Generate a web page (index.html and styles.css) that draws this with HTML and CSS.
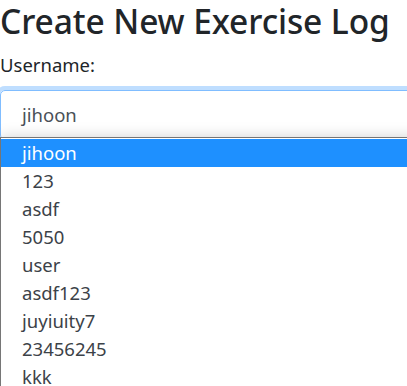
FILE: index.html
```html
<!DOCTYPE html>
<html>
<head>
<meta charset="utf-8">
<link rel="stylesheet" href="styles.css">
</head>
<body>
<div class="page">
  <h3 class="title">Create New Exercise Log</h3>
  <div class="group">
    <label class="label">Username:</label>
    <div class="select-wrap">
      <div class="control">jihoon</div>
      <ul class="menu">
        <li class="opt sel">jihoon</li>
        <li class="opt">123</li>
        <li class="opt">asdf</li>
        <li class="opt">5050</li>
        <li class="opt">user</li>
        <li class="opt">asdf123</li>
        <li class="opt">juyiuity7</li>
        <li class="opt">23456245</li>
        <li class="opt">kkk</li>
      </ul>
    </div>
  </div>
</div>
</body>
</html>
```

FILE: styles.css
```css
html, body {
  margin: 0;
  padding: 0;
  background: #fff;
  overflow: hidden;
}
body {
  font-family: "Noto Sans", "Open Sans", sans-serif;
  color: #212529;
  width: 407px;
  height: 386px;
}
.page {
  width: 407px;
}
.title {
  font-size: 33.5px;
  font-weight: 500;
  line-height: 42px;
  margin: 0 0 9px 0;
  letter-spacing: -0.1px;
  white-space: nowrap;
}
.label {
  display: block;
  font-size: 18.5px;
  line-height: 28px;
  margin: 0 0 11px 0;
}
.select-wrap {
  position: relative;
  margin-right: -30px;
}
.control {
  box-sizing: border-box;
  height: 50px;
  border: 1px solid #80bdff;
  border-radius: 5px;
  box-shadow: 0 0 0 4px rgba(0, 123, 255, 0.25);
  padding: 0 21px;
  font-size: 18.5px;
  line-height: 48px;
  color: #495057;
}
.menu {
  position: absolute;
  left: 0;
  top: 47px;
  right: 0;
  margin: 0;
  padding: 1px 0 0 0;
  list-style: none;
  background: #fff;
  border: 1px solid #767676;
  box-shadow: 0 0 14px rgba(0, 0, 0, 0.18);
}
.opt {
  height: 28px;
  line-height: 28px;
  padding: 0 21px;
  font-size: 18.5px;
  color: #3c4248;
}
.opt.sel {
  background: #1e90ff;
  color: #fff;
}
```
